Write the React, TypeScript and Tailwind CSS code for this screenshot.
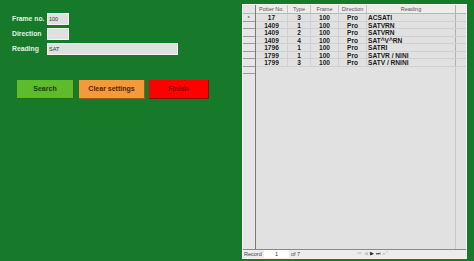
const rows = [
  { potter: "17", type: "3", frame: "100", dir: "Pro", reading: "ACSATI" },
  { potter: "1409", type: "1", frame: "100", dir: "Pro", reading: "SATVRN" },
  { potter: "1409", type: "2", frame: "100", dir: "Pro", reading: "SATVRN" },
  { potter: "1409", type: "4", frame: "100", dir: "Pro", reading: "SAT^V^RN" },
  { potter: "1796", type: "1", frame: "100", dir: "Pro", reading: "SATRI" },
  { potter: "1799", type: "1", frame: "100", dir: "Pro", reading: "SATVR / NINI" },
  { potter: "1799", type: "3", frame: "100", dir: "Pro", reading: "SATV / RNINI" },
];

const font = { fontFamily: '"Liberation Sans", Arial, sans-serif' };

const App = () => {
  return (
    <div className="flex w-[474px] h-[261px] bg-[#177a2a] overflow-hidden" style={font}>
      {/* Search form */}
      <div className="w-[242px] shrink-0 pt-[13px]">
        <div className="flex flex-col gap-[3px] pl-[12px]">
          <div className="flex items-center h-[12px]">
            <span className="w-[35px] text-[6.8px] font-bold text-[#e3f1e3]">Frame no.</span>
            <div className="w-[22px] h-[12px] bg-[#e0e0e0] border border-[#f4f4f4] text-[5.5px] text-[#333] pl-[1px] leading-[10px]">100</div>
          </div>
          <div className="flex items-center h-[12px]">
            <span className="w-[35px] text-[6.8px] font-bold text-[#e3f1e3]">Direction</span>
            <div className="w-[22px] h-[12px] bg-[#e0e0e0] border border-[#f4f4f4]" />
          </div>
          <div className="flex items-center h-[12px]">
            <span className="w-[35px] text-[6.8px] font-bold text-[#e3f1e3]">Reading</span>
            <div className="w-[131px] h-[12px] bg-[#e0e0e0] border border-[#f4f4f4] text-[5.5px] text-[#333] pl-[1px] leading-[10px]">SAT</div>
          </div>
        </div>

        <div className="flex mt-[25px] pl-[17px] gap-[5px]">
          <button className="w-[57px] h-[19px] bg-[#5ebb2b] border-b border-r border-[#2d6a1a] text-[7px] font-bold text-[#1e3a10]">
            Search
          </button>
          <button className="w-[66px] h-[19px] bg-[#f6993b] border-b border-r border-[#9a5a1a] text-[7px] font-bold text-[#4a2a08]">
            Clear settings
          </button>
          <button className="w-[60px] h-[19px] ml-[-1px] bg-[#ff0000] border-b border-r border-[#8a1010] text-[7px] font-bold text-[#7a0000]">
            Finish
          </button>
        </div>
      </div>

      {/* Datasheet */}
      <div className="mt-[4px] w-[225px] h-[255px] flex flex-col bg-[#e1e1e1] border border-[#f4f4f4]">
        <div className="flex-1 flex">
          {/* row selectors */}
          <div className="w-[13px] shrink-0 flex flex-col border-r border-[#7a7a7a] bg-[#e6e6e6]">
            <div className="h-[9px] border-b border-[#b8b8b8]" />
            {rows.map((r, i) => (
              <div key={i} className="h-[7.5px] border-b border-[#9a9a9a] flex items-center justify-center text-[4px] text-[#555]">
                {i === 0 ? "▸" : ""}
              </div>
            ))}
            <div className="h-[7.5px] border-b border-[#9a9a9a]" />
          </div>

          <div className="flex-1 flex flex-col">
            <div className="flex h-[9px] bg-[#ececec] border-b border-[#b8b8b8] text-[5.5px] text-[#555]">
              <div className="w-[32px] border-r border-[#c4c4c4] text-center leading-[8px]">Potter No.</div>
              <div className="w-[23px] border-r border-[#c4c4c4] text-center leading-[8px]">Type</div>
              <div className="w-[28px] border-r border-[#c4c4c4] text-center leading-[8px]">Frame</div>
              <div className="w-[28px] border-r border-[#c4c4c4] text-center leading-[8px]">Direction</div>
              <div className="w-[89px] border-r border-[#b0b0b0] text-center leading-[8px]">Reading</div>
              <div className="flex-1" />
            </div>
            {rows.map((r, i) => (
              <div key={i} className="flex h-[7.5px] border-b border-[#d0d0d0] text-[6.6px] font-bold text-[#1a1a1a] leading-[7px]">
                <div className="w-[32px] border-r border-[#d0d0d0] text-center">{r.potter}</div>
                <div className="w-[23px] border-r border-[#d0d0d0] text-center">{r.type}</div>
                <div className="w-[28px] border-r border-[#d0d0d0] text-center">{r.frame}</div>
                <div className="w-[28px] border-r border-[#d0d0d0] text-center">{r.dir}</div>
                <div className="w-[89px] border-r border-[#b0b0b0] pl-[1px]">{r.reading}</div>
                <div className="flex-1" />
              </div>
            ))}
            <div className="flex-1 flex">
              <div className="w-[200px] border-r border-[#c8c8c8]" />
            </div>
          </div>
        </div>

        {/* navigation bar */}
        <div className="h-[9px] flex items-center bg-[#ececec] border-t border-[#8a8a8a] text-[5.5px] text-[#444]">
          <span className="w-[21px] pl-[1px]">Record</span>
          <div className="w-[25px] h-[8px] bg-white text-center leading-[8px] text-[#333]">1</div>
          <span className="pl-[2px] w-[68px]">of 7</span>
          <div className="flex items-center gap-[2px] text-[5px]">
            <span className="text-[#c0c0c0]">⏮</span>
            <span className="text-[#c0c0c0]">◀</span>
            <span className="text-[#222]">▶</span>
            <span className="text-[#222]">⏭</span>
            <span className="text-[#c0c0c0]">▸*</span>
          </div>
        </div>
      </div>
    </div>
  );
};

export default App;
